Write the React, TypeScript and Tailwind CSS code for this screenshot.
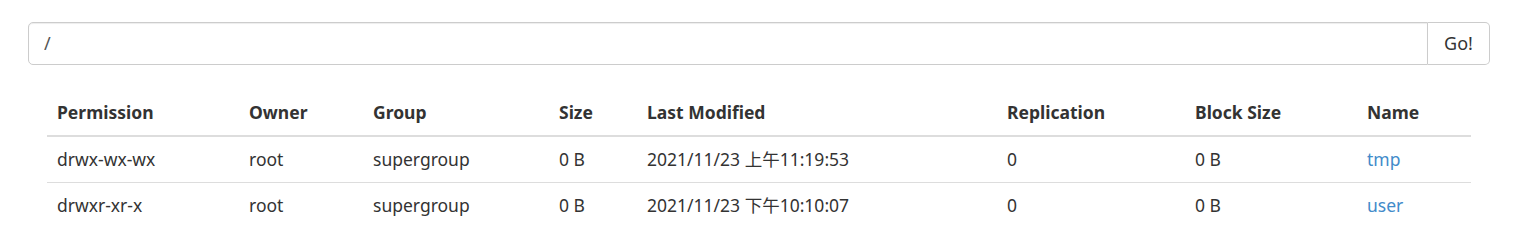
import React from "react";

interface Entry {
  permission: string;
  owner: string;
  group: string;
  size: string;
  modified: string;
  replication: string;
  blockSize: string;
  name: string;
}

const entries: Entry[] = [
  {
    permission: "drwx-wx-wx",
    owner: "root",
    group: "supergroup",
    size: "0 B",
    modified: "2021/11/23 上午11:19:53",
    replication: "0",
    blockSize: "0 B",
    name: "tmp",
  },
  {
    permission: "drwxr-xr-x",
    owner: "root",
    group: "supergroup",
    size: "0 B",
    modified: "2021/11/23 下午10:10:07",
    replication: "0",
    blockSize: "0 B",
    name: "user",
  },
];

const App: React.FC = () => {
  return (
    <div
      className="bg-white text-[#333] text-[17.5px] leading-[25px] pl-[28px] pr-[44px] pt-[22px]"
      style={{ fontFamily: '"Noto Sans", "Noto Sans CJK SC", sans-serif' }}
    >
      {/* Path bar */}
      <div className="flex h-[43px]">
        <input
          defaultValue="/"
          className="flex-1 min-w-0 border border-[#ccc] rounded-l-[5px] px-[15px] text-[18px] text-[#555] outline-none shadow-[inset_0_1px_1px_rgba(0,0,0,0.075)]"
        />
        <button className="w-[62px] border border-l-0 border-[#ccc] rounded-r-[5px] bg-white text-[18px] text-[#333]">
          Go!
        </button>
      </div>

      {/* Directory listing */}
      <div className="px-[19px] mt-[25px]">
        <table className="w-full border-collapse table-fixed">
          <colgroup>
            <col className="w-[192px]" />
            <col className="w-[124px]" />
            <col className="w-[186px]" />
            <col className="w-[88px]" />
            <col className="w-[360px]" />
            <col className="w-[188px]" />
            <col className="w-[172px]" />
            <col />
          </colgroup>
          <thead>
            <tr className="border-b-2 border-[#ddd] text-left">
              <th className="p-[10px] font-bold">Permission</th>
              <th className="p-[10px] font-bold">Owner</th>
              <th className="p-[10px] font-bold">Group</th>
              <th className="p-[10px] font-bold">Size</th>
              <th className="p-[10px] font-bold">Last Modified</th>
              <th className="p-[10px] font-bold">Replication</th>
              <th className="p-[10px] font-bold">Block Size</th>
              <th className="p-[10px] font-bold">Name</th>
            </tr>
          </thead>
          <tbody>
            {entries.map((e, i) => (
              <tr key={e.name} className={i > 0 ? "border-t border-[#ddd]" : ""}>
                <td className="p-[10px]">{e.permission}</td>
                <td className="p-[10px]">{e.owner}</td>
                <td className="p-[10px]">{e.group}</td>
                <td className="p-[10px]">{e.size}</td>
                <td className="p-[10px]">{e.modified}</td>
                <td className="p-[10px]">{e.replication}</td>
                <td className="p-[10px]">{e.blockSize}</td>
                <td className="p-[10px]">
                  <a href="#" className="text-[#428bca]">
                    {e.name}
                  </a>
                </td>
              </tr>
            ))}
          </tbody>
        </table>
      </div>
    </div>
  );
};

export default App;
